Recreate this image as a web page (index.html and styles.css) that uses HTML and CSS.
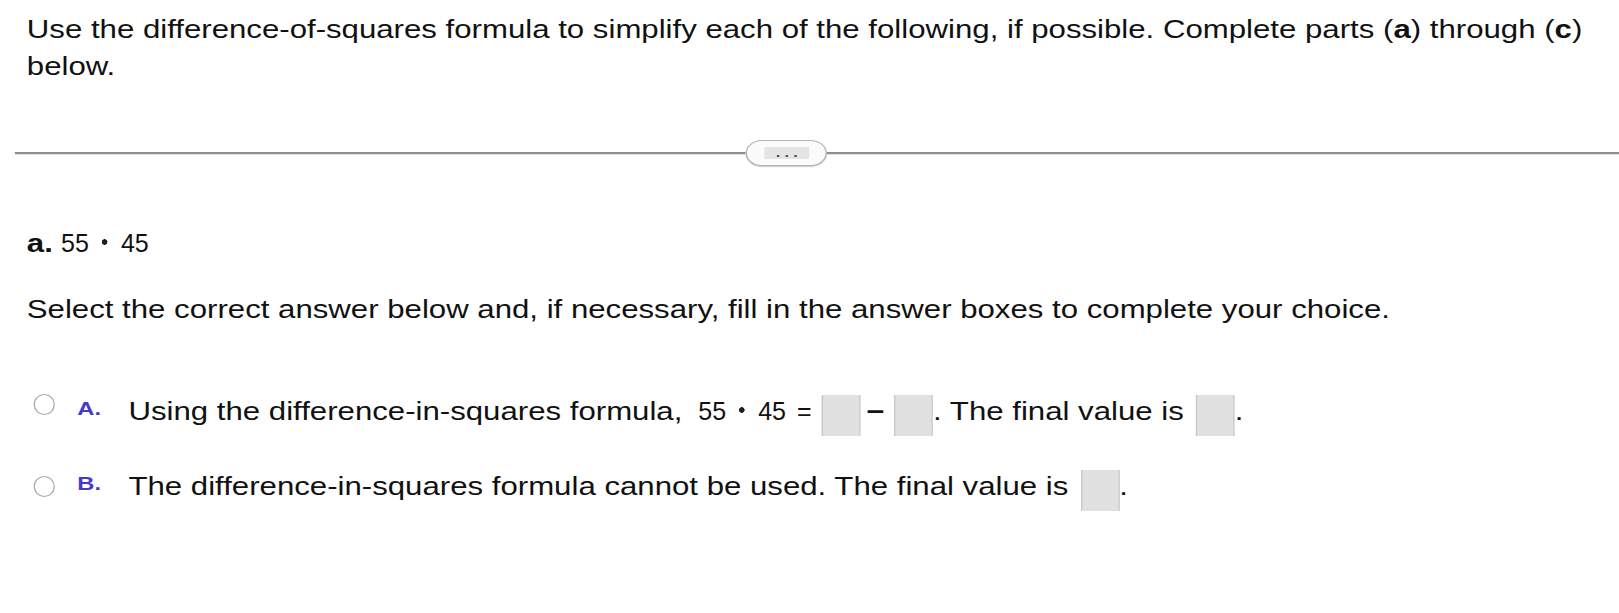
FILE: index.html
```html
<!DOCTYPE html>
<html lang="en">
<head>
<meta charset="utf-8">
<title>Difference of squares</title>
<link rel="stylesheet" href="styles.css">
</head>
<body>
<div class="page">
  <p class="intro">Use the difference-of-squares formula to simplify each of the following, if possible. Complete parts (<b>a</b>) through (<b>c</b>)<br>below.</p>

  <div class="divider">
    <div class="rule rule-left"></div>
    <div class="more-btn"><span class="dots"><i></i><i></i><i></i></span></div>
    <div class="rule rule-right"></div>
  </div>

  <p class="part"><b>a.</b> <span class="math math-part"><span>55</span><span class="dot"></span><span>45</span></span></p>

  <p class="instr">Select the correct answer below and, if necessary, fill in the answer boxes to complete your choice.</p>

  <div class="options">
    <div class="option option-a">
      <span class="radio radio-a"></span><span class="letter">A.</span><span class="opt-text">Using the difference-in-squares formula, <span class="math math-a"><span>55</span><span class="dot"></span><span>45</span><span class="eq">=</span></span><span class="box box-first"></span><span class="minus">−</span><span class="box box-second"></span>. The final value is <span class="box box-third"></span>.</span>
    </div>
    <div class="option option-b">
      <span class="radio radio-b"></span><span class="letter">B.</span><span class="opt-text">The difference-in-squares formula cannot be used. The final value is <span class="box box-b"></span>.</span>
    </div>
  </div>
</div>
</body>
</html>
```

FILE: styles.css
```css
html, body {
  margin: 0;
  padding: 0;
  background: #ffffff;
  overflow: hidden;
}

.page {
  width: 1299px;
  transform: scaleX(1.247);
  transform-origin: 0 0;
  font-family: "Liberation Sans", Arial, sans-serif;
  font-size: 25px;
  line-height: 37px;
  color: #111111;
}

.page p {
  margin: 0;
}

.intro {
  padding: 11px 0 0 21.5px;
  white-space: nowrap;
}

/* divider with the "more" pill */
.divider {
  display: flex;
  align-items: center;
  height: 28px;
  margin-top: 54px;
  padding-left: 12px;
}

.rule {
  height: 0;
  border-top: 2px solid #8e8e8e;
  border-bottom: 1px solid #e2e2e2;
}

.rule-left {
  width: 586px;
}

.rule-right {
  flex: 1;
}

.more-btn {
  width: 65px;
  height: 26px;
  box-sizing: border-box;
  border: 1px solid #b4b4b4;
  border-radius: 13px;
  background: #fbfbfb;
  box-shadow: 0 1px 1px #c8c8c8;
  display: flex;
  align-items: center;
  justify-content: center;
}

.dots {
  width: 36px;
  height: 12px;
  background: #e4e4e4;
  display: flex;
  align-items: flex-end;
  justify-content: center;
  gap: 5px;
  padding-bottom: 2px;
  box-sizing: border-box;
}

.dots i {
  width: 2px;
  height: 2px;
  background: #555555;
}

/* math runs are not stretched: counter-scale them */
.math {
  display: inline-block;
  white-space: nowrap;
  transform: scaleX(0.802);
  transform-origin: 0 0;
}

.math-part {
  width: 90px;
  margin-right: -17.8px;
}

.math-a {
  width: 114px;
  margin-left: 6px;
  margin-right: -22.5px;
}

.dot {
  display: inline-block;
  width: 32px;
  height: 6px;
  vertical-align: 7px;
  background: radial-gradient(circle, #1e1e1e 0, #1e1e1e 2.5px, transparent 3.1px) center / 7px 7px no-repeat;
}

.eq {
  margin-left: 11px;
}

.part {
  margin-top: 58px !important;
  padding-left: 21.5px;
}

.instr {
  margin-top: 29px !important;
  padding-left: 21.5px;
}

/* answer choices */
.options {
  margin-top: 65px;
  padding-left: 26.5px;
}

.option {
  white-space: nowrap;
}

.option-b {
  margin-top: 32px;
}

.radio {
  display: inline-block;
  width: 17px;
  height: 21px;
  box-sizing: border-box;
  border: 1.5px solid #a9a9a9;
  border-radius: 50%;
  background: #ffffff;
}

.radio-a {
  vertical-align: 5.5px;
}

.radio-b {
  vertical-align: -1.5px;
}

.letter {
  display: inline-block;
  width: 41px;
  margin-left: 18.5px;
  font-size: 19px;
  line-height: 20px;
  font-weight: bold;
  color: #4638cc;
  vertical-align: 5px;
}

.box {
  display: inline-block;
  width: 31px;
  height: 41px;
  box-sizing: border-box;
  background: #e1e1e1;
  border-left: 1px solid #c6c6c6;
  border-right: 1px solid #cbcbcb;
  vertical-align: -16px;
}

.box-first {
  margin-left: 7px;
}

.minus {
  font-weight: bold;
  margin: 0 8px 0 5px;
}

.box-third {
  margin-left: 3px;
}

.box-b {
  margin-left: 3px;
}
```
